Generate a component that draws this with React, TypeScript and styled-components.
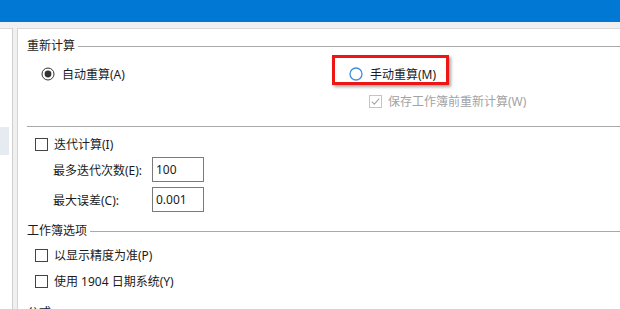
import React from "react";
import styled, { createGlobalStyle } from "styled-components";

const GlobalStyle = createGlobalStyle`
  html, body { margin: 0; padding: 0; background: #f0f0f0; }
  body {
    font-family: "Segoe UI", "Noto Sans", "Noto Sans CJK SC", sans-serif;
    font-size: 12px;
    color: #1b1b1b;
    overflow: hidden;
  }
`;

const Window = styled.div`
  width: 620px;
  height: 309px;
  display: flex;
  flex-direction: column;
  background: #f0f0f0;
  overflow: hidden;
`;

const TitleBar = styled.div`
  height: 22px;
  flex: none;
  background: #0078d4;
`;

const Body = styled.div`
  flex: 1;
  display: flex;
  gap: 4px;
  padding-top: 6px;
  min-height: 0;
`;

const Sidebar = styled.div`
  width: 12px;
  flex: none;
  background: #ffffff;
  border-top: 1px solid #d9d9d9;
  border-right: 1px solid #cfcfcf;
  display: flex;
  flex-direction: column;
`;

const SideItem = styled.div<{ $top: number }>`
  margin-top: ${(p) => p.$top}px;
  margin-right: 3px;
  height: 28px;
  background: #e6ebf1;
`;

const Main = styled.div`
  flex: 1;
  background: #ffffff;
  border-top: 1px solid #d9d9d9;
  border-left: 1px solid #d4d4d4;
  padding: 9px 0 0 9px;
  display: flex;
  flex-direction: column;
  min-width: 0;
`;

const SectionHeader = styled.div<{ $mt?: number }>`
  height: 16px;
  margin-top: ${(p) => p.$mt ?? 0}px;
  display: flex;
  align-items: center;
  flex: none;
  line-height: 16px;
  &::after {
    content: "";
    flex: 1;
    height: 1px;
    background: #a9a9a9;
    margin-left: 3px;
  }
`;

const RadioGrid = styled.div`
  margin-top: 9px;
  margin-left: 14px;
  display: grid;
  grid-template-columns: 308px 1fr;
  grid-template-rows: 22px 20px;
  row-gap: 6px;
  flex: none;
`;

const Option = styled.label<{ $disabled?: boolean; $gap?: number }>`
  position: relative;
  justify-self: start;
  display: inline-flex;
  align-items: center;
  gap: ${(p) => p.$gap ?? 7}px;
  height: 100%;
  white-space: nowrap;
  color: ${(p) => (p.$disabled ? "#a3a3a3" : "#1b1b1b")};
`;

const SubOption = styled(Option)`
  grid-column: 2;
  margin-left: 20px;
`;

const Highlight = styled.span`
  position: absolute;
  left: -17px;
  right: -13px;
  top: -8px;
  bottom: 0;
  border: 3px solid #ee1515;
  box-shadow: 2px 2px 3px rgba(0, 0, 0, 0.35);
  pointer-events: none;
`;

const Divider = styled.div`
  margin-top: 15px;
  height: 1px;
  background: #a9a9a9;
  flex: none;
`;

const CheckRow = styled.label<{ $mt: number }>`
  margin-top: ${(p) => p.$mt}px;
  margin-left: 8px;
  height: 20px;
  display: flex;
  align-items: center;
  gap: 6px;
  flex: none;
  white-space: nowrap;
`;

const FieldRow = styled.div<{ $mt: number }>`
  margin-top: ${(p) => p.$mt}px;
  margin-left: 26px;
  height: 25px;
  display: grid;
  grid-template-columns: 99px 52px;
  align-items: center;
  flex: none;
`;

const FieldLabel = styled.span`
  white-space: nowrap;
`;

const Input = styled.div`
  height: 25px;
  box-sizing: border-box;
  border: 1px solid #7a7a7a;
  padding-left: 3px;
  display: flex;
  align-items: center;
  font-size: 12px;
  color: #1b1b1b;
`;

const Radio = ({ checked, focus }: { checked?: boolean; focus?: boolean }) => (
  <svg width="14" height="14" viewBox="0 0 14 14">
    <circle
      cx="7"
      cy="7"
      r="6"
      fill="#fff"
      stroke={focus ? "#3d8ee0" : "#333"}
      strokeWidth={focus ? 1.3 : 1}
    />
    {checked && <circle cx="7" cy="7" r="3.4" fill="#333" />}
  </svg>
);

const Check = ({ checked, disabled }: { checked?: boolean; disabled?: boolean }) => (
  <svg width="13" height="13" viewBox="0 0 13 13">
    <rect
      x="0.5"
      y="0.5"
      width="12"
      height="12"
      fill="#fff"
      stroke={disabled ? "#c4c4c4" : "#444"}
    />
    {checked && (
      <path
        d="M2.8 6.6 L5.3 9.1 L10.2 3.6"
        fill="none"
        stroke={disabled ? "#a5a5a5" : "#333"}
        strokeWidth="1.1"
      />
    )}
  </svg>
);

export default function App() {
  return (
    <>
      <GlobalStyle />
      <Window>
        <TitleBar />
        <Body>
          <Sidebar>
            <SideItem $top={98} />
          </Sidebar>
          <Main>
            <SectionHeader>重新计算</SectionHeader>
            <RadioGrid>
              <Option>
                <Radio checked />
                自动重算(A)
              </Option>
              <Option>
                <Radio focus />
                手动重算(M)
                <Highlight />
              </Option>
              <SubOption $disabled $gap={6}>
                <Check checked disabled />
                保存工作簿前重新计算(W)
              </SubOption>
            </RadioGrid>
            <Divider />
            <CheckRow $mt={7}>
              <Check />
              迭代计算(I)
            </CheckRow>
            <FieldRow $mt={3}>
              <FieldLabel>最多迭代次数(E):</FieldLabel>
              <Input>100</Input>
            </FieldRow>
            <FieldRow $mt={5}>
              <FieldLabel>最大误差(C):</FieldLabel>
              <Input>0.001</Input>
            </FieldRow>
            <SectionHeader $mt={11}>工作簿选项</SectionHeader>
            <CheckRow $mt={6}>
              <Check />
              以显示精度为准(P)
            </CheckRow>
            <CheckRow $mt={6}>
              <Check />
              使用 1904 日期系统(Y)
            </CheckRow>
            <SectionHeader $mt={14}>公式</SectionHeader>
          </Main>
        </Body>
      </Window>
    </>
  );
}
